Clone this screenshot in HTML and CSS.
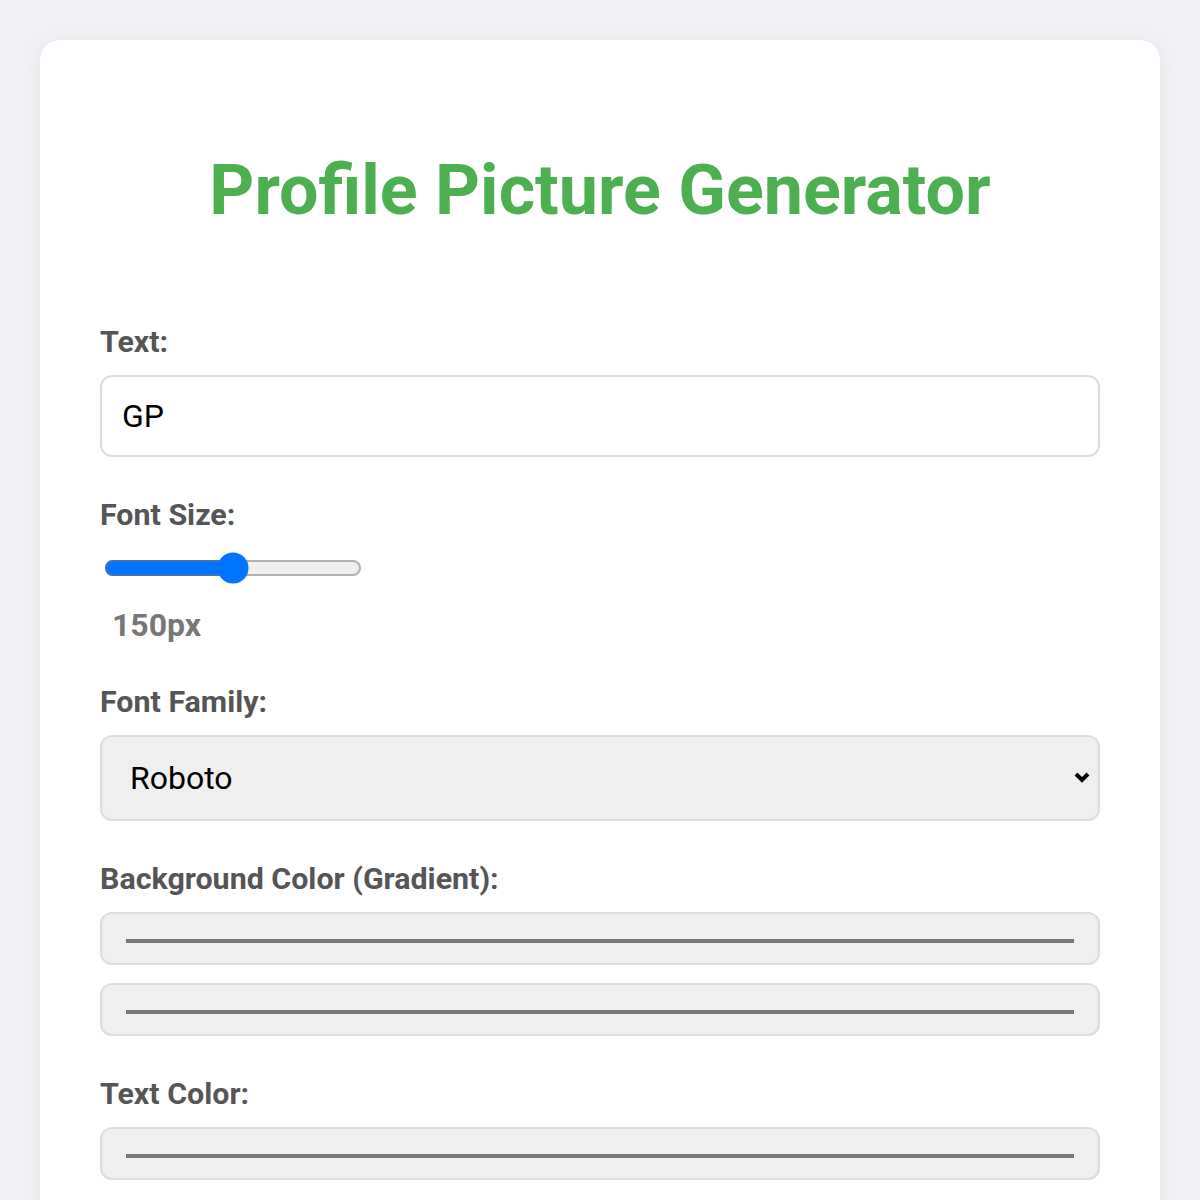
FILE: index.html
```html
<!DOCTYPE html>
<html lang="en">
<head>
    <meta charset="UTF-8">
    <meta name="viewport" content="width=device-width, initial-scale=1.0">
    <title>Profile Picture Generator</title>
    <link rel="stylesheet" href="styles.css">
</head>
<body>
    <div class="container">
        <h1>Profile Picture Generator</h1>

        <div class="form-group">
            <label for="text">Text:</label>
            <input type="text" id="text" value="GP">
        </div>

        <div class="form-group">
            <label for="fontSize">Font Size:</label>
            <input type="range" id="fontSize" min="50" max="250" value="150" oninput="updateSize()">
            <span id="fontSizeValue" class="size-value">150px</span>
        </div>

        <div class="form-group">
            <label for="fontFamily">Font Family:</label>
            <select id="fontFamily">
                <option value="Roboto">Roboto</option>
                <option value="Open Sans">Open Sans</option>
                <option value="Lato">Lato</option>
                <option value="Inter">Inter</option>
            </select>
        </div>

        <div class="form-group">
            <label>Background Color (Gradient):</label>
            <input type="color" id="bgColor1" value="#4caf50">
            <input type="color" id="bgColor2" value="#2196f3">
        </div>

        <div class="form-group">
            <label for="textColor">Text Color:</label>
            <input type="color" id="textColor" value="#ffffff">
        </div>
    </div>

    <script>
        function updateSize() {
            const size = document.getElementById('fontSize').value;
            document.getElementById('fontSizeValue').textContent = size + 'px';
        }
    </script>
</body>
</html>
```

FILE: styles.css
```css
html {
    zoom: 2;
}
body {
    font-family: Roboto, "Noto Sans", Arial, sans-serif;
    background-color: #f0f1f5;
    margin: 0;
    padding: 20px;
}
.container {
    background-color: #fff;
    border-radius: 10px;
    padding: 30px;
    box-shadow: 0 2px 10px rgba(0, 0, 0, 0.06);
}
h1 {
    text-align: center;
    color: #4caf50;
    font-size: 35px;
    margin: 24.5px 0 46.5px;
}
.form-group {
    margin-bottom: 20px;
}
label {
    display: block;
    font-size: 15.2px;
    font-weight: bold;
    color: #555;
    margin-bottom: 8px;
}
input[type="text"], select, input[type="color"] {
    display: block;
    width: 100%;
    box-sizing: border-box;
    padding: 10px;
    border: 1px solid #ddd;
    border-radius: 6px;
    font-family: inherit;
    font-size: 16px;
}
select {
    appearance: none;
    -webkit-appearance: none;
    padding: 11px 14px;
    color: #000;
    background-color: #efefef;
    background-image: url("data:image/svg+xml,%3Csvg xmlns='http://www.w3.org/2000/svg' viewBox='0 0 8 6'%3E%3Cpath d='M1 1 L4 4 L7 1' fill='none' stroke='%23000' stroke-width='2'/%3E%3C/svg%3E");
    background-repeat: no-repeat;
    background-position: right 4px center;
    background-size: 8px 6px;
}
input[type="color"] {
    height: 26.5px;
    background-color: #efefef;
    margin-bottom: 9px;
}
input[type="color"]:last-child {
    margin-bottom: 0;
}
.size-value {
    display: block;
    margin: 7px 0 0 6px;
    font-size: 16px;
    font-weight: bold;
    color: #777;
}
```
